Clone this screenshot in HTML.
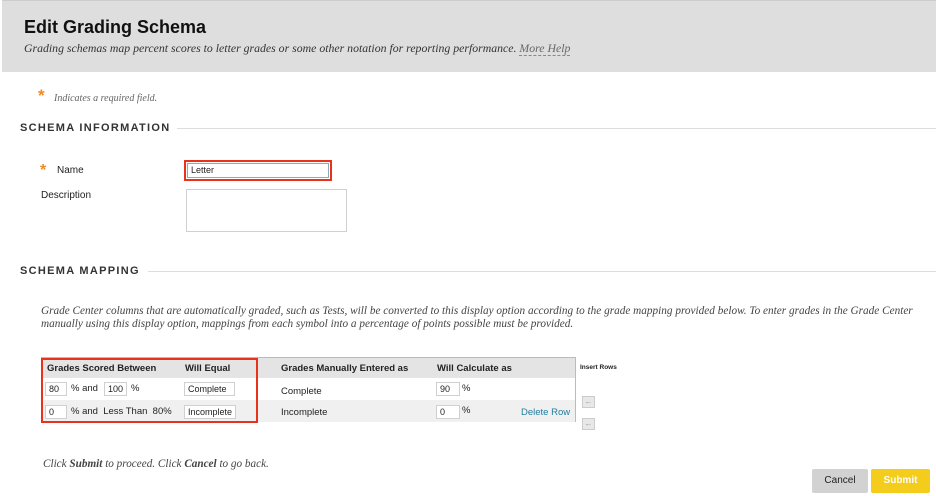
<!DOCTYPE html>
<html><head><style>
body{margin:0;width:936px;height:496px;background:#fff;font-family:"Liberation Sans",sans-serif;position:relative;overflow:hidden;color:#222}
.a{position:absolute}
.ser{font-family:"Liberation Serif",serif;font-style:italic}
.inp{position:absolute;background:#fff;border:1px solid #d0d0d0;font-size:9px;padding-left:3px;box-sizing:border-box;line-height:13px}
.hd{font-size:11px;font-weight:bold;letter-spacing:1.3px;color:#333}
.line{position:absolute;height:1px;background:#ddd}
</style></head><body>
<div class="a" style="left:2px;top:0;width:934px;height:71px;background:#dedede;border-top:1px solid #ccc"></div>
<div class="a" style="left:24px;top:17px;font-size:18px;font-weight:bold;color:#111">Edit Grading Schema</div>
<div class="a ser" style="left:24px;top:41px;font-size:11.8px;color:#333">Grading schemas map percent scores to letter grades or some other notation for reporting performance. <span style="color:#666;border-bottom:1px dashed #888">More Help</span></div>
<div class="a" style="left:38px;top:86px;color:#f08a24;font-size:17px;font-weight:bold">*</div>
<div class="a ser" style="left:54px;top:93px;font-size:10px;color:#666">Indicates a required field.</div>
<div class="a hd" style="left:20px;top:122px">SCHEMA INFORMATION</div>
<div class="line" style="left:177px;top:128px;width:759px"></div>
<div class="a" style="left:40px;top:162px;color:#f08a24;font-size:16px;font-weight:bold">*</div>
<div class="a" style="left:57px;top:165px;font-size:10px">Name</div>
<div class="a" style="left:184px;top:160px;width:148px;height:21px;border:2px solid #e8321c;box-sizing:border-box"></div>
<div class="inp" style="left:187px;top:163px;width:142px;height:15px;border-color:#8ab">Letter</div>
<div class="a" style="left:41px;top:190px;font-size:10px">Description</div>
<div class="inp" style="left:186px;top:189px;width:161px;height:43px"></div>
<div class="a hd" style="left:20px;top:265px">SCHEMA MAPPING</div>
<div class="line" style="left:148px;top:271px;width:788px"></div>
<div class="a ser" style="left:41px;top:305px;width:895px;font-size:11.25px;line-height:13px;color:#444;white-space:nowrap">Grade Center columns that are automatically graded, such as Tests, will be converted to this display option according to the grade mapping provided below. To enter grades in the Grade Center<br>manually using this display option, mappings from each symbol into a percentage of points possible must be provided.</div>
<div class="a" style="left:41px;top:357px;width:535px;height:65px;border:1px solid #bbb;box-sizing:border-box;background:#fff">
 <div class="a" style="left:0;top:0;width:533px;height:20px;background:#e4e4e4"></div>
 <div class="a" style="left:0;top:42px;width:533px;height:22px;background:#f0f0f0"></div>
</div>
<div style="font-size:9.5px">
<div class="a" style="left:47px;top:363px;font-weight:bold">Grades Scored Between</div>
<div class="a" style="left:185px;top:363px;font-weight:bold">Will Equal</div>
<div class="a" style="left:281px;top:363px;font-weight:bold">Grades Manually Entered as</div>
<div class="a" style="left:437px;top:363px;font-weight:bold">Will Calculate as</div>
<div class="inp" style="left:45px;top:382px;width:22px;height:14px">80</div>
<div class="a" style="left:71px;top:383px">% and</div>
<div class="inp" style="left:104px;top:382px;width:23px;height:14px">100</div>
<div class="a" style="left:131px;top:383px">%</div>
<div class="inp" style="left:184px;top:382px;width:51px;height:14px">Complete</div>
<div class="a" style="left:281px;top:386px">Complete</div>
<div class="inp" style="left:436px;top:382px;width:24px;height:14px">90</div>
<div class="a" style="left:462px;top:383px">%</div>
<div class="inp" style="left:45px;top:405px;width:22px;height:14px">0</div>
<div class="a" style="left:71px;top:406px">% and &nbsp;Less Than &nbsp;80%</div>
<div class="inp" style="left:184px;top:405px;width:52px;height:14px">Incomplete</div>
<div class="a" style="left:281px;top:407px">Incomplete</div>
<div class="inp" style="left:436px;top:405px;width:24px;height:14px">0</div>
<div class="a" style="left:462px;top:405px">%</div>
<div class="a" style="left:521px;top:407px;color:#1f7e9e">Delete Row</div>
</div>
<div class="a" style="left:41px;top:358px;width:217px;height:65px;border:2px solid #e8321c;box-sizing:border-box"></div>
<div class="a" style="left:580px;top:364px;font-size:6.5px;font-weight:bold">Insert Rows</div>
<div class="a" style="left:582px;top:396px;width:11px;height:10px;background:#e8e8e8;border:1px solid #ccc;font-size:8px;line-height:10px;text-align:center;color:#999">&#8592;</div>
<div class="a" style="left:582px;top:418px;width:11px;height:10px;background:#e8e8e8;border:1px solid #ccc;font-size:8px;line-height:10px;text-align:center;color:#999">&#8592;</div>
<div class="a ser" style="left:43px;top:458px;font-size:11.2px;color:#444">Click <b>Submit</b> to proceed. Click <b>Cancel</b> to go back.</div>
<div class="a" style="left:812px;top:469px;width:56px;height:24px;background:#d2d2d2;border-radius:2px;font-size:10px;text-align:center;line-height:24px">Cancel</div>
<div class="a" style="left:871px;top:469px;width:59px;height:24px;background:#f4cd1c;border-radius:2px;font-size:10px;font-weight:bold;color:#fff;text-align:center;line-height:24px">Submit</div>
</body></html>
